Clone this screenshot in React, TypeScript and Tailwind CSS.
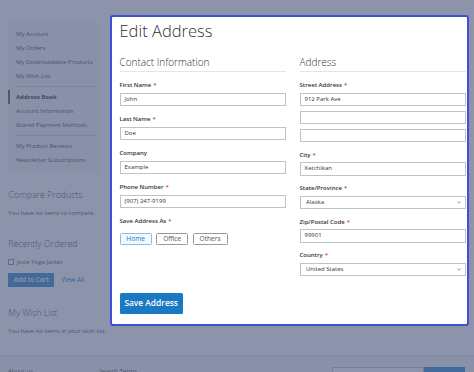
import React from "react";

const navGroups = [
  ["My Account", "My Orders", "My Downloadable Products", "My Wish List"],
  ["Address Book", "Account Information", "Stored Payment Methods"],
  ["My Product Reviews", "Newsletter Subscriptions"],
];

const Req = () => <span className="ml-[2px] text-[#e02b27]">*</span>;

function Label({ text, required }: { text: string; required?: boolean }) {
  return (
    <div className="text-[6px] leading-[8px] font-semibold text-[#333] whitespace-nowrap">
      {text}
      {required && <Req />}
    </div>
  );
}

function TextBox({ value }: { value?: string }) {
  return (
    <div className="h-[13.5px] border border-[#c2c2c2] bg-white px-[4px] flex items-center text-[6px] text-[#333]">
      {value}
    </div>
  );
}

function Field({ label, value, required }: { label: string; value?: string; required?: boolean }) {
  return (
    <div>
      <Label text={label} required={required} />
      <div className="mt-[3.5px]">
        <TextBox value={value} />
      </div>
    </div>
  );
}

function SelectField({ label, value }: { label: string; value: string }) {
  return (
    <div>
      <Label text={label} required />
      <div className="mt-[3.5px] h-[13.5px] border border-[#c2c2c2] bg-white pl-[5.5px] pr-[4px] flex items-center justify-between text-[6px] text-[#333]">
        <span>{value}</span>
        <svg width="4" height="3" viewBox="0 0 4 3" className="text-[#666]">
          <path d="M0.4 0.6 L2 2.2 L3.6 0.6" fill="none" stroke="currentColor" strokeWidth="0.7" />
        </svg>
      </div>
    </div>
  );
}

function Legend({ children }: { children: React.ReactNode }) {
  return (
    <div className="text-[10px] leading-[14px] font-light text-[#333] pb-[2px] border-b border-[#e5e5e5] mb-[9px]">
      {children}
    </div>
  );
}

function Sidebar() {
  return (
    <aside className="w-[91px] shrink-0">
      <nav className="bg-[#f5f5f5] pt-[5px] pb-[6px]">
        {navGroups.map((group, gi) => (
          <div key={gi}>
            {gi > 0 && <div className="ml-[8px] mr-[3px] my-[3px] h-px bg-[#d1d1d1]" />}
            {group.map((item) => {
              const current = item === "Address Book";
              return (
                <div
                  key={item}
                  className={`relative pl-[7.7px] text-[6px] leading-[14px] whitespace-nowrap ${
                    current ? "font-bold text-[#111]" : "text-[#333]"
                  }`}
                >
                  {current && <span className="absolute left-0 top-0 h-full w-[1.5px] bg-[#6e3a2a]" />}
                  {item}
                </div>
              );
            })}
          </div>
        ))}
      </nav>

      <div className="mt-[16.7px] text-[8.8px] leading-[12px] font-light text-[#333] whitespace-nowrap">
        Compare Products
      </div>
      <div className="mt-[6.6px] text-[6px] leading-[10px] text-[#333] whitespace-nowrap">
        You have no items to compare.
      </div>

      <div className="mt-[19.7px] text-[8.8px] leading-[12px] font-light text-[#333] whitespace-nowrap">
        Recently Ordered
      </div>
      <div className="mt-[7.3px] flex items-center gap-[3px] text-[6px] leading-[10px] text-[#333] whitespace-nowrap">
        <span className="w-[5.4px] h-[5.4px] border border-[#888] bg-white" />
        Josie Yoga Jacket
      </div>
      <div className="mt-[6.4px] flex items-center gap-[7px]">
        <div className="h-[13.3px] w-[46px] bg-[#1979c3] text-white text-[6.4px] font-semibold flex items-center justify-center">
          Add to Cart
        </div>
        <span className="text-[6.4px] text-[#006bb4]">View All</span>
      </div>

      <div className="mt-[20.3px] text-[8.8px] leading-[12px] font-light text-[#333] whitespace-nowrap">
        My Wish List
      </div>
      <div className="mt-[7.4px] text-[6px] leading-[10px] text-[#333] whitespace-nowrap">
        You have no items in your wish list.
      </div>
    </aside>
  );
}

function Footer() {
  return (
    <footer className="border-t border-[#dcdcdc] bg-[#f4f4f4] h-[40px] pl-[8px] pr-[9px] pt-[10.5px] flex">
      <div className="w-[91px] text-[6px] text-[#333]">About us</div>
      <div className="text-[6px] text-[#333]">Search Terms</div>
      <div className="ml-auto flex">
        <div className="w-[92px] h-[16px] border border-[#c2c2c2] bg-white flex items-center gap-[3px] pl-[3px] text-[6px] text-[#777]">
          <svg width="6" height="5" viewBox="0 0 6 5">
            <rect x="0" y="0" width="6" height="5" fill="#555" />
          </svg>
          Enter your email address
        </div>
        <div className="w-[41px] h-[16px] bg-[#1979c3] text-white text-[6.5px] font-semibold flex items-center justify-center">
          Subscribe
        </div>
      </div>
    </footer>
  );
}

function Modal() {
  return (
    <div className="absolute left-[110px] top-[15px] w-[359px] h-[311px] bg-white border-2 border-[#3f50d6] rounded-[3px] pl-[7.5px] pr-[1.5px] pt-[4px]">
      <h1 className="text-[16.5px] leading-[20px] font-light text-[#333]">Edit Address</h1>
      <div className="mt-[14px] grid grid-cols-2 gap-x-[14px]">
        <div>
          <Legend>Contact Information</Legend>
          <div className="flex flex-col gap-[9px]">
            <Field label="First Name" value="John" required />
            <Field label="Last Name" value="Doe" required />
            <Field label="Company" value="Example" />
            <Field label="Phone Number" value="(907) 247-9199" required />
            <div>
              <Label text="Save Address As" required />
              <div className="mt-[7.5px] flex gap-[4.6px] text-[6.6px]">
                <div className="h-[12px] w-[32.3px] flex items-center justify-center border border-[#8fbbe3] bg-[#f3f8fd] text-[#1979c3] rounded-[1.5px]">
                  Home
                </div>
                <div className="h-[12px] w-[31.6px] flex items-center justify-center border border-[#999] bg-white text-[#555] rounded-[1.5px]">
                  Office
                </div>
                <div className="h-[12px] w-[35px] flex items-center justify-center border border-[#999] bg-white text-[#555] rounded-[1.5px]">
                  Others
                </div>
              </div>
            </div>
          </div>
        </div>
        <div>
          <Legend>Address</Legend>
          <div className="flex flex-col gap-[8.5px]">
            <div>
              <Label text="Street Address" required />
              <div className="mt-[3.5px] flex flex-col gap-[4.6px]">
                <TextBox value="912 Park Ave" />
                <TextBox />
                <TextBox />
              </div>
            </div>
            <Field label="City" value="Ketchikan" required />
            <SelectField label="State/Province" value="Alaska" />
            <Field label="Zip/Postal Code" value="99901" required />
            <SelectField label="Country" value="United States" />
          </div>
        </div>
      </div>
      <button className="mt-[17px] h-[21px] w-[63.3px] bg-[#1979c3] text-white text-[8.4px] font-semibold rounded-[1.5px]">
        Save Address
      </button>
    </div>
  );
}

export default function App() {
  return (
    <div className="relative w-[474px] h-[372px] overflow-hidden bg-white font-['Open_Sans',sans-serif]">
      <div className="h-[355px] pl-[8.3px] pt-[21.7px]">
        <Sidebar />
      </div>
      <Footer />
      <div className="absolute inset-0 bg-[rgba(86,97,133,0.68)]" />
      <Modal />
    </div>
  );
}
